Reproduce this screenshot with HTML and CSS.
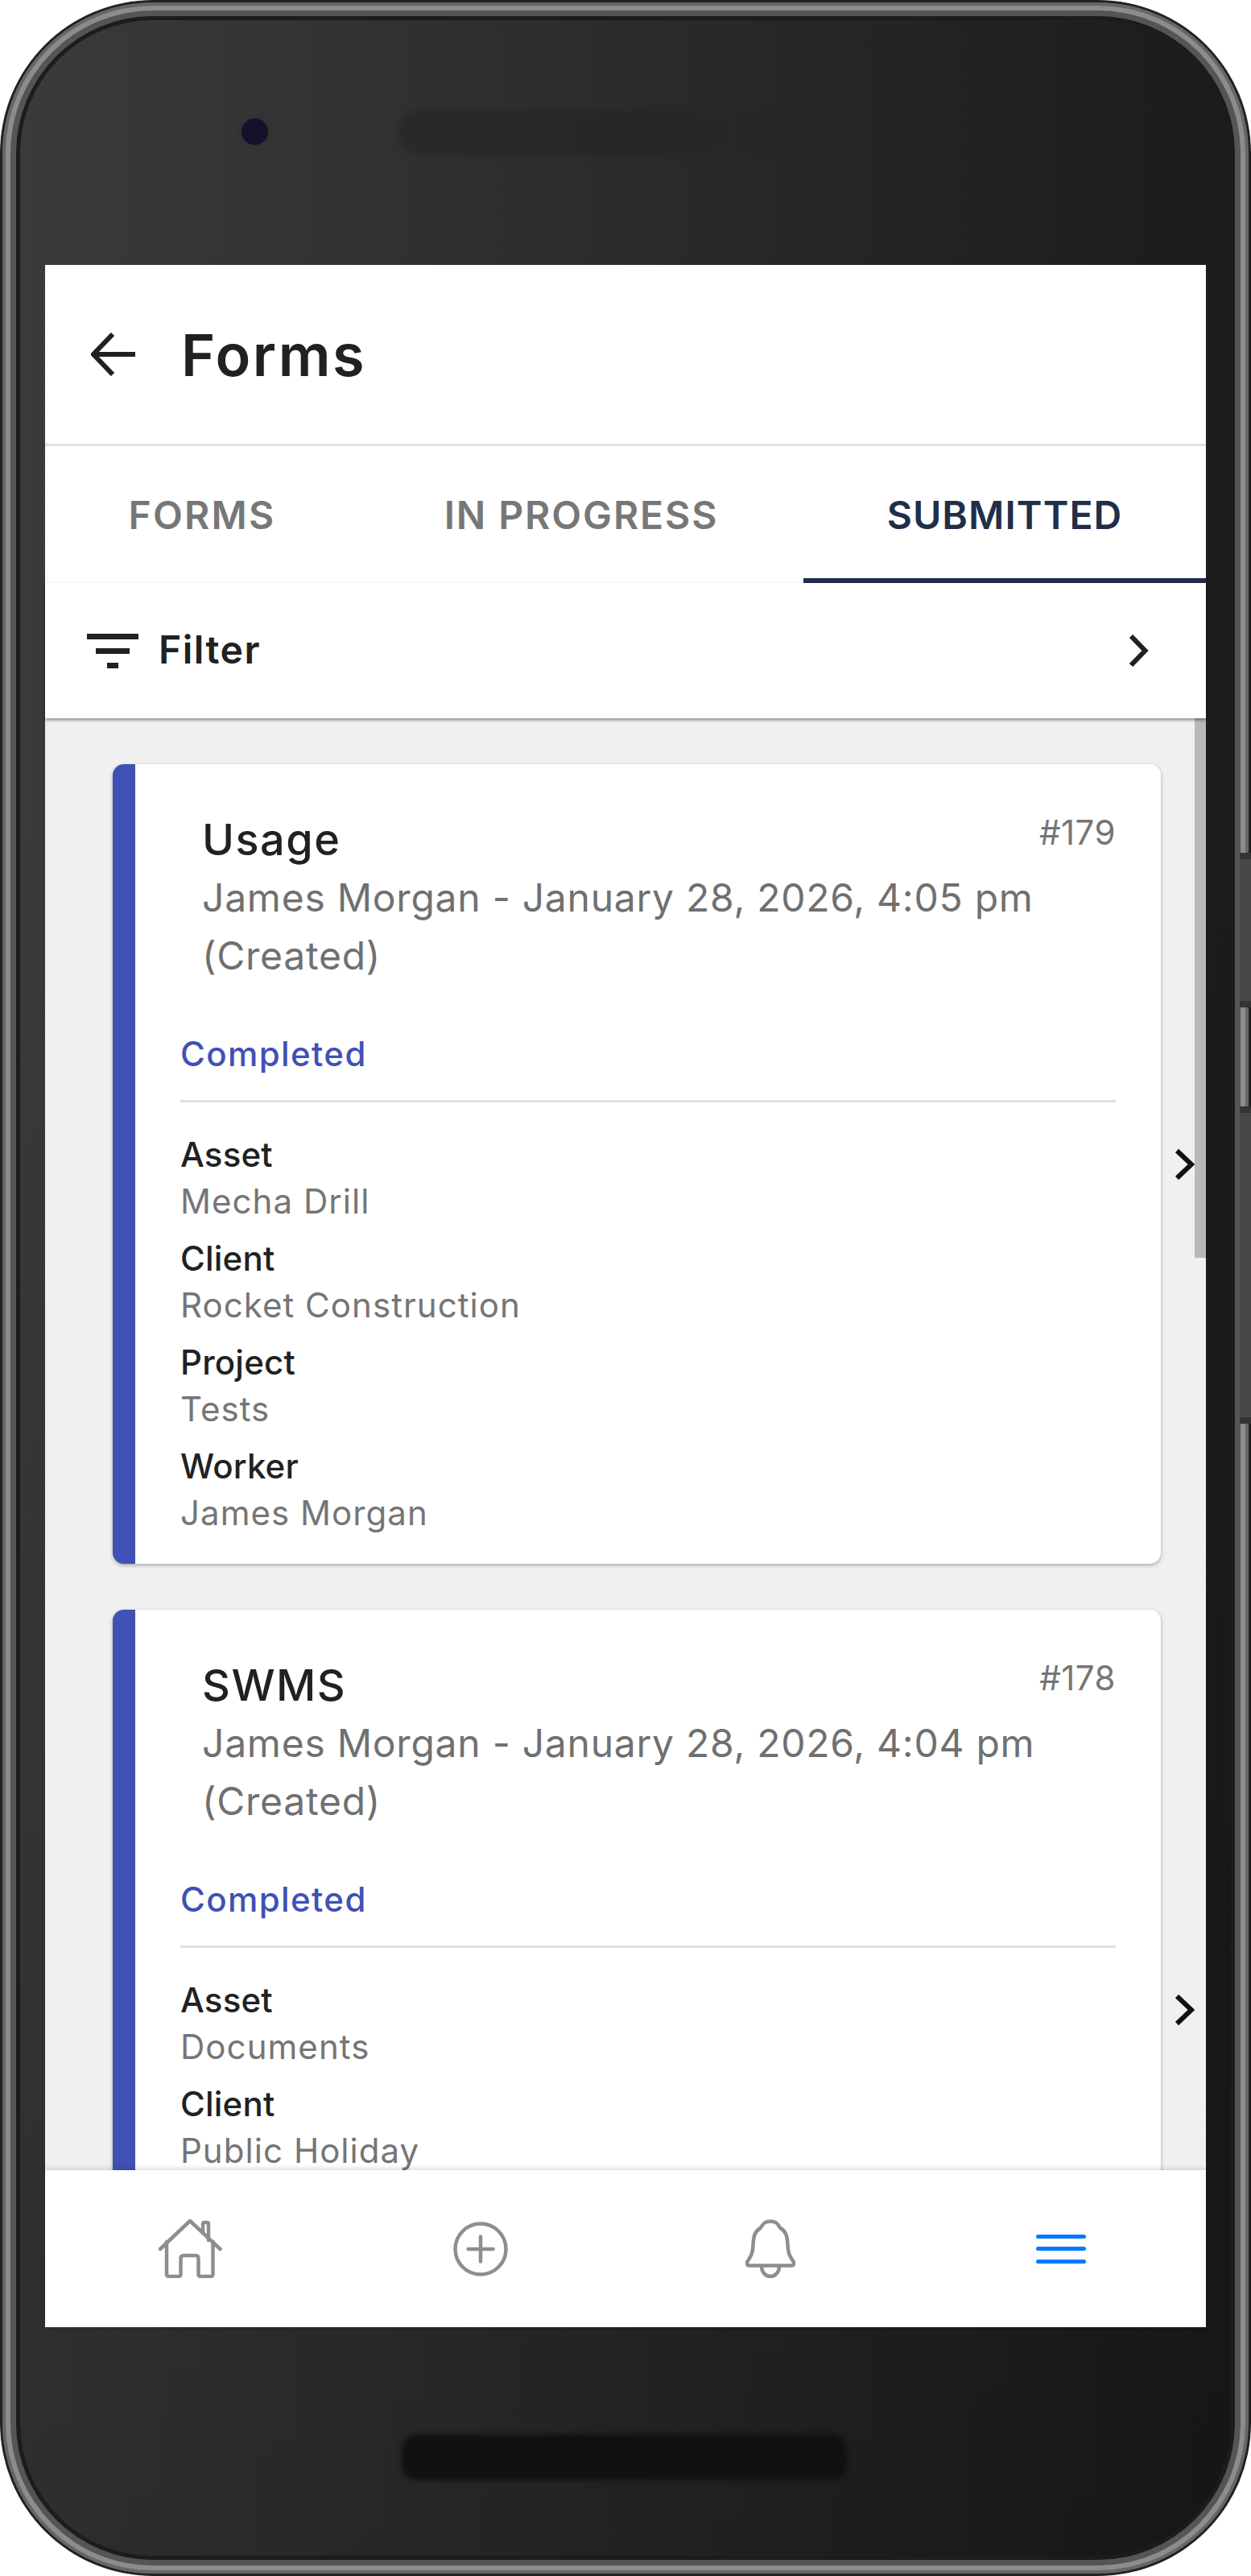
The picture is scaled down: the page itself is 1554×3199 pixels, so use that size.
FILE: index.html
```html
<!DOCTYPE html>
<html lang="en">
<head>
<meta charset="utf-8">
<title>Forms</title>
<link rel="stylesheet" href="styles.css">
</head>
<body>
<div class="phone">
  <span class="side-btn side-btn-power"></span>
  <span class="side-btn side-btn-volume"></span>
  <div class="bezel-top">
    <span class="camera"></span>
    <span class="speaker-top"></span>
  </div>
  <main class="screen">
    <header class="app-bar">
      <svg class="back-icon" viewBox="0 0 55 54" aria-hidden="true"><path d="M27 2 3 27l24 25M3 27h52" fill="none" stroke="#212121" stroke-width="6"/></svg>
      <h1 class="app-title">Forms</h1>
    </header>
    <nav class="tabs">
      <div class="tab tab-forms">FORMS</div>
      <div class="tab tab-progress">IN PROGRESS</div>
      <div class="tab tab-active">SUBMITTED</div>
    </nav>
    <div class="filter-bar">
      <div class="filter-icon"><span class="bar bar-1"></span><span class="bar bar-2"></span><span class="bar bar-3"></span></div>
      <span class="filter-label">Filter</span>
      <svg class="filter-chevron" viewBox="0 0 25 40" aria-hidden="true"><path d="M3 2l17.500 18L3 38" fill="none" stroke="#212121" stroke-width="6"/></svg>
    </div>
    <section class="list">
      <div class="scrollbar"></div>
      <div class="row">
        <article class="card">
          <div class="card-head"><span class="card-title">Usage</span><span class="card-num">#179</span></div>
          <div class="card-sub">James Morgan - January 28, 2026, 4:05 pm (Created)</div>
          <div class="card-status">Completed</div>
          <div class="card-rule"></div>
          <dl class="fields">
            <div class="field"><dt>Asset</dt><dd>Mecha Drill</dd></div>
            <div class="field"><dt>Client</dt><dd>Rocket Construction</dd></div>
            <div class="field"><dt>Project</dt><dd>Tests</dd></div>
            <div class="field"><dt>Worker</dt><dd>James Morgan</dd></div>
          </dl>
        </article>
        <svg class="row-chevron" viewBox="0 0 26 40" aria-hidden="true"><path d="M4 3l18 17L4 37" fill="none" stroke="#111" stroke-width="6"/></svg>
      </div>
      <div class="row">
        <article class="card">
          <div class="card-head"><span class="card-title">SWMS</span><span class="card-num">#178</span></div>
          <div class="card-sub">James Morgan - January 28, 2026, 4:04 pm (Created)</div>
          <div class="card-status">Completed</div>
          <div class="card-rule"></div>
          <dl class="fields">
            <div class="field"><dt>Asset</dt><dd>Documents</dd></div>
            <div class="field"><dt>Client</dt><dd>Public Holiday</dd></div>
          </dl>
        </article>
        <svg class="row-chevron" viewBox="0 0 26 40" aria-hidden="true"><path d="M4 3l18 17L4 37" fill="none" stroke="#111" stroke-width="6"/></svg>
      </div>
    </section>
    <nav class="bottom-nav">
      <div class="nav-item">
        <svg class="nav-home" viewBox="0 0 79 73" aria-hidden="true"><g fill="none" stroke="#8e8e8e" stroke-width="4.5" stroke-linecap="round" stroke-linejoin="round"><path d="M2 37 39 2l37.500 35"/><path d="M10 28v40q0 3 3 3h11.500q3 0 3-3V49q0-4 3.500-4h15q3.500 0 3.500 4v19q0 3 3 3h12q3 0 3-3V28"/><path d="M55 17V6q0-2 2-2h3q2 0 2 2v20"/></g></svg>
      </div>
      <div class="nav-item">
        <svg class="nav-add" viewBox="0 0 68 68" aria-hidden="true"><g fill="none" stroke="#8e8e8e" stroke-width="4.5" stroke-linecap="round"><circle cx="34" cy="34" r="31.500"/><path d="M34 18.500v31M18.500 34h31"/></g></svg>
      </div>
      <div class="nav-item">
        <svg class="nav-bell" viewBox="0 0 62 73" aria-hidden="true"><g fill="none" stroke="#8e8e8e" stroke-width="4.5" stroke-linejoin="round"><path d="M4.500 57.500h53c2.500 0 3.500-2.500 2-5C55 46 53 42 52.500 32 52 20 50 15 43.500 11 41 9 41 2.500 31 2.500S21 9 18.500 11C12 15 10 20 9.500 32 9 42 7 46 2.500 52.500c-1.500 2.500-.5 5 2 5Z"/><path d="M20 58c0 17 22 17 22 0"/></g></svg>
      </div>
      <div class="nav-item">
        <div class="nav-menu"><span class="menu-line"></span><span class="menu-line"></span><span class="menu-line"></span></div>
      </div>
    </nav>
  </main>
  <div class="bezel-bottom"><span class="speaker-bottom"></span></div>
</div>
</body>
</html>
```

FILE: styles.css
```css
* { box-sizing: border-box; }
html, body { margin: 0; padding: 0; background: #fff; }
body { font-family: Inter, "Open Sans", sans-serif; }

.phone {
  position: relative;
  width: 1554px;
  height: 3199px;
  padding: 0 56px;
  border-radius: 190px;
  overflow: hidden;
  background: linear-gradient(to bottom, rgba(0,0,0,0) 30%, rgba(0,0,0,.22) 100%), linear-gradient(to right, #3b3b3b, #1b1b1b);
  box-shadow: inset 0 0 0 3px #222, inset 0 0 0 7px #666, inset 0 0 0 13px #8c8c8c, inset 0 0 0 20px #555, inset 0 0 0 25px #1c1c1c;
}
.side-btn { position: absolute; right: 0; width: 14px; background: #484848; border-top: 8px solid #333; border-bottom: 8px solid #333; }
.side-btn-power { top: 1059px; height: 192px; }
.side-btn-volume { top: 1374px; height: 394px; }

.bezel-top { height: 329px; display: flex; align-items: flex-start; }
.camera { margin: 147px 0 0 244px; width: 33px; height: 33px; border-radius: 50%; background: #14122a; box-shadow: 0 0 6px rgba(40,36,60,.6); }
.speaker-top { margin: 137px 0 0 162px; width: 560px; height: 56px; border-radius: 28px; background: linear-gradient(to right, #292929, #272727 60%, rgba(38,38,38,0)); filter: blur(3px); }

.screen { height: 2561px; background: #fff; display: flex; flex-direction: column; }

.app-bar { height: 225px; flex: none; display: flex; align-items: center; padding-left: 57px; border-bottom: 3px solid #e0e0e0; }
.back-icon { width: 55px; height: 54px; }
.app-title { margin: 0 0 0 57px; font-size: 72px; font-weight: 600; color: #212121; letter-spacing: 2.500px; }

.tabs { height: 170px; flex: none; display: grid; grid-template-columns: 390px 552px 500px; }
.tab { display: flex; align-items: center; justify-content: center; padding-top: 1px; font-size: 48px; font-weight: 600; color: #777; }
.tab-forms { letter-spacing: 2.200px; }
.tab-progress { letter-spacing: 1.900px; }
.tab-active { color: #212e4a; letter-spacing: 1.100px; box-shadow: inset 0 -6px 0 #212d48; }

.filter-bar { height: 168px; flex: none; display: flex; align-items: center; padding: 0 71px 4px 52px; box-shadow: 0 2px 4px rgba(0,0,0,.45); position: relative; z-index: 2; background: #fff; }
.filter-icon { width: 64px; margin-top: 4px; display: flex; flex-direction: column; align-items: center; gap: 11px; }
.bar { display: block; height: 7px; background: #212121; }
.bar-1 { width: 64px; }
.bar-2 { width: 42px; }
.bar-3 { width: 14px; }
.filter-label { margin-left: 25px; font-size: 48px; font-weight: 600; color: #212121; flex: 1; letter-spacing: 1.500px; }
.filter-chevron { width: 25px; height: 40px; margin-top: 4px; }

.list { flex: 1; min-height: 0; overflow: hidden; background: #f0f0f0; padding: 57px 14px 0 84px; display: flex; flex-direction: column; gap: 57px; position: relative; }
.scrollbar { position: absolute; right: 0; top: 0; width: 14px; height: 670px; background: #b8b8b8; }
.row { display: flex; align-items: center; flex: none; gap: 16px; }
.card { width: 1302px; min-height: 993px; flex: none; background: #fff; border-left: 28px solid #3f51b5; border-radius: 14px; padding: 58px 56px 34px; box-shadow: 0 2px 5px rgba(0,0,0,.3); }
.row-chevron { width: 26px; height: 40px; flex: none; position: relative; z-index: 1; }

.card-head { display: flex; justify-content: space-between; align-items: flex-start; padding-left: 27px; }
.card-title { font-size: 54px; line-height: 72px; color: #212121; font-weight: 450; letter-spacing: 1.500px; }
.card-num { font-size: 42px; line-height: 60px; margin-top: -3px; color: #757575; letter-spacing: .500px; }
.card-sub { padding-left: 27px; font-size: 48px; line-height: 72px; color: #707070; letter-spacing: .750px; }
.card-status { margin-top: 56px; font-size: 42px; line-height: 60px; color: #3f51b5; font-weight: 450; letter-spacing: 1.400px; }
.card-rule { margin-top: 27px; height: 3px; background: #e0e0e0; }
.fields { margin: 36px 0 0; display: flex; flex-direction: column; gap: 13px; }
.field dt { font-size: 42px; line-height: 58px; color: #212121; font-weight: 450; letter-spacing: .200px; }
.field dd { margin: 0; font-size: 42px; line-height: 58px; color: #757575; letter-spacing: 1.050px; }

.bottom-nav { height: 195px; flex: none; display: grid; grid-template-columns: repeat(4, 1fr); background: #fff; box-shadow: 0 -2px 6px rgba(0,0,0,.15); position: relative; z-index: 2; }
.nav-item { display: flex; align-items: center; justify-content: center; }
.nav-home { width: 79px; height: 73px; }
.nav-add { width: 68px; height: 68px; }
.nav-bell { width: 62px; height: 73px; }
.nav-menu { width: 62px; display: flex; flex-direction: column; gap: 10.500px; }
.menu-line { display: block; height: 5px; border-radius: 3px; background: #007aff; }

.bezel-bottom { height: 309px; display: flex; justify-content: center; }
.speaker-bottom { margin: 133px 0 0 -3px; width: 553px; height: 57px; border-radius: 18px; background: #111; filter: blur(3px); }
```
